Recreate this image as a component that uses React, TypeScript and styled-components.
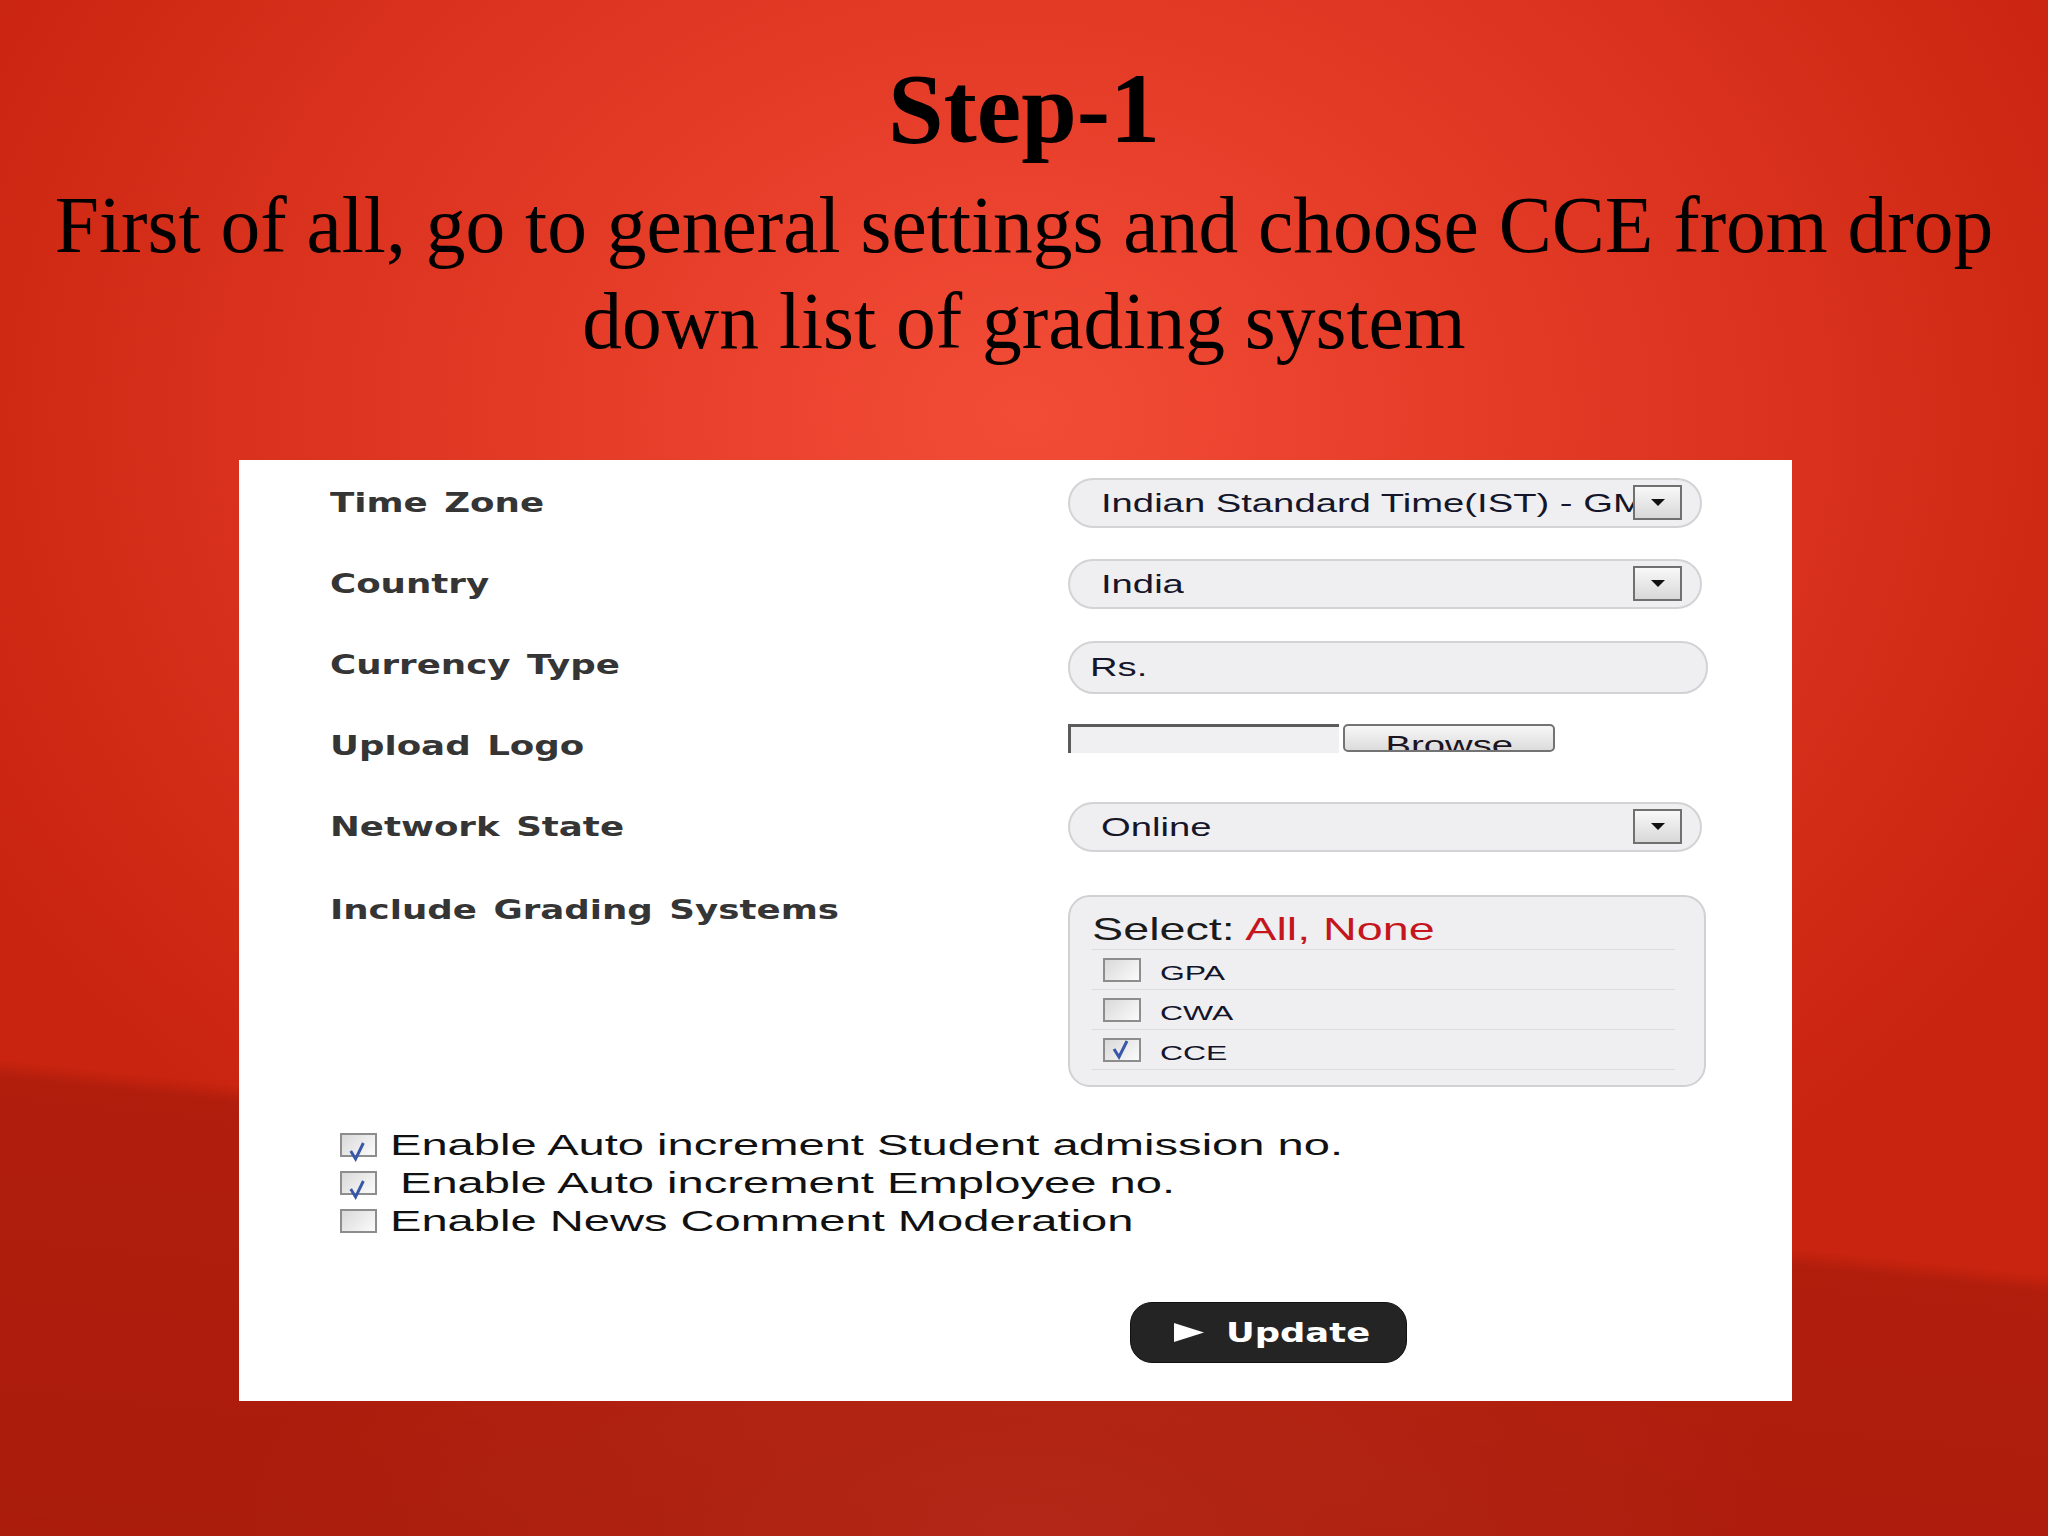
import React from 'react';
import styled, { createGlobalStyle } from 'styled-components';

const GlobalStyle = createGlobalStyle`
  html, body {
    margin: 0;
    padding: 0;
  }
  body {
    font-family: 'Liberation Sans', Arial, sans-serif;
  }
`;

// the form in the slide is a screenshot pasted wider than it was taken,
// so every piece of its text is widened on the x axis only
const Stretch = styled.span<{ $sx: number; $origin?: string }>`
  display: inline-block;
  white-space: nowrap;
  transform: scaleX(${(p) => p.$sx});
  transform-origin: ${(p) => p.$origin || 'left center'};
`;

const Page = styled.div`
  width: 2048px;
  height: 1536px;
  overflow: hidden;
  box-sizing: border-box;
  padding-top: 59px;
  background:
    linear-gradient(186deg, rgba(0, 0, 0, 0) 72.8%, rgba(70, 0, 0, 0.18) 73.8%, rgba(70, 0, 0, 0.24) 100%),
    radial-gradient(ellipse 38% 26% at 50% 100%, rgba(215, 62, 40, 0.55), rgba(215, 62, 40, 0) 100%),
    radial-gradient(ellipse 58% 62% at 50% 27%, #f24c37 0%, #e43b27 40%, #c9240f 100%);
`;

const Title = styled.h1`
  margin: 0;
  text-align: center;
  font: bold 100px/100px 'Liberation Serif', 'Times New Roman', serif;
  color: #000;
`;

const Subtitle = styled.p`
  margin: 18px 0 0;
  text-align: center;
  font: 79.5px/96px 'Liberation Serif', 'Times New Roman', serif;
  color: #000;
`;

const Panel = styled.section`
  width: 1553px;
  height: 941px;
  margin: 91px 0 0 239px;
  box-sizing: border-box;
  padding: 2px 0 0 91px;
  background: #fff;
`;

const Row = styled.div<{ $top?: boolean }>`
  display: flex;
  align-items: ${(p) => (p.$top ? 'flex-start' : 'center')};
  min-height: 81px;
  padding-top: ${(p) => (p.$top ? '28px' : '0')};
  box-sizing: border-box;
`;

const Label = styled.div`
  width: 738px;
  flex: none;
  font: bold 26px/30px 'DejaVu Sans', Verdana, sans-serif;
  color: #353535;
  word-spacing: 3px;
`;

const Select = styled.div`
  box-sizing: border-box;
  width: 634px;
  height: 50px;
  display: flex;
  align-items: center;
  padding: 0 18px 0 31px;
  border: 2px solid #d3d3d5;
  border-radius: 25px;
  background: #efeff1;
`;

const SelectValue = styled.div`
  flex: 1;
  min-width: 0;
  overflow: hidden;
  white-space: nowrap;
  font-size: 26px;
  line-height: 30px;
  color: #16162a;
`;

const ArrowButton = styled.span`
  flex: none;
  box-sizing: border-box;
  width: 49px;
  height: 35px;
  display: flex;
  align-items: center;
  justify-content: center;
  border: 2px solid #707070;
  background: linear-gradient(#f8f8f8, #d8d8d8);
`;

const TextInput = styled.div`
  box-sizing: border-box;
  width: 640px;
  height: 53px;
  margin-top: 6px;
  display: flex;
  align-items: center;
  padding-left: 20px;
  border: 2px solid #d3d3d5;
  border-radius: 26px;
  background: #efeff1;
  font-size: 26px;
  color: #16162a;
`;

const FileRow = styled.div`
  display: flex;
  gap: 4px;
  margin-top: -14px;
`;

const FileField = styled.div`
  box-sizing: border-box;
  width: 271px;
  height: 29px;
  border-top: 3px solid #5b5b5b;
  border-left: 3px solid #5b5b5b;
  background: #f0f0f2;
`;

const BrowseButton = styled.div`
  box-sizing: border-box;
  width: 212px;
  height: 28px;
  overflow: hidden;
  padding-top: 6px;
  text-align: center;
  border: 2px solid #737373;
  border-radius: 5px;
  background: linear-gradient(#f7f7f7, #dcdcdc);
  font-size: 26px;
  line-height: 26px;
  color: #1c1420;
`;

const GradeBox = styled.div`
  box-sizing: border-box;
  width: 638px;
  height: 192px;
  padding: 12px 29px 0 22px;
  border: 2px solid #d0d1d3;
  border-radius: 22px;
  background: #efeff1;
`;

const GradeHeader = styled.div`
  height: 41px;
  box-sizing: border-box;
  border-bottom: 1px solid #dcdcde;
  font-size: 32px;
  line-height: 40px;
  color: #1b1b1b;
`;

const Red = styled.span`
  color: #c4161c;
`;

const GradeRow = styled.div`
  height: 40px;
  box-sizing: border-box;
  display: flex;
  align-items: center;
  padding-left: 11px;
  border-bottom: 1px solid #dcdcde;
  font-size: 21px;
  color: #14142a;
`;

const Box = styled.span<{ $w: number }>`
  flex: none;
  box-sizing: border-box;
  width: ${(p) => p.$w}px;
  height: 24px;
  display: block;
  border: 2px solid #8d8d8d;
  background: linear-gradient(135deg, #d9d9d9, #fbfbfb);
`;

const BoxText = styled.span<{ $gap: number; $dy?: number }>`
  margin-left: ${(p) => p.$gap}px;
  padding-top: ${(p) => p.$dy || 0}px;
`;

const CheckList = styled.div`
  margin-top: 39px;
  padding-left: 10px;
`;

const CheckLine = styled.div`
  height: 38px;
  display: flex;
  align-items: center;
  font-size: 30px;
  color: #111;
`;

const UpdateButton = styled.button`
  box-sizing: border-box;
  width: 277px;
  height: 61px;
  margin: 62px 0 0 800px;
  display: flex;
  align-items: center;
  padding: 0 0 0 43px;
  border: 1px solid #111;
  border-radius: 22px;
  background: #242424;
  color: #fff;
  font: bold 27px/30px 'DejaVu Sans', Verdana, sans-serif;
  cursor: pointer;
`;

const UpdateText = styled.span`
  margin-left: 22px;
`;

const Checkbox = ({ checked, width }: { checked?: boolean; width: number }) => (
  <Box $w={width}>
    {checked && (
      <svg width="100%" height="100%" viewBox="0 0 34 20" preserveAspectRatio="none">
        <path d="M9 9 L14 17 L22 1" fill="none" stroke="#3957a8" strokeWidth="3" />
      </svg>
    )}
  </Box>
);

const Arrow = () => (
  <svg width="14" height="7" viewBox="0 0 14 7">
    <polygon points="0,0 14,0 7,7" fill="#111" />
  </svg>
);

const Dropdown = ({ value }: { value: string }) => (
  <Select>
    <SelectValue>
      <Stretch $sx={1.47}>{value}</Stretch>
    </SelectValue>
    <ArrowButton>
      <Arrow />
    </ArrowButton>
  </Select>
);

const FieldLabel = ({ children }: { children: React.ReactNode }) => (
  <Label>
    <Stretch $sx={1.37}>{children}</Stretch>
  </Label>
);

const grades = [
  { name: 'GPA', checked: false },
  { name: 'CWA', checked: false },
  { name: 'CCE', checked: true },
];

const options = [
  { text: 'Enable Auto increment Student admission no.', checked: true, gap: 13 },
  { text: 'Enable Auto increment Employee no.', checked: true, gap: 23 },
  { text: 'Enable News Comment Moderation', checked: false, gap: 13 },
];

export default function App() {
  return (
    <>
      <GlobalStyle />
      <Page>
        <Title>Step-1</Title>
        <Subtitle>
          First of all, go to general settings and choose CCE from drop
          <br />
          down list of grading system
        </Subtitle>
        <Panel>
          <Row>
            <FieldLabel>Time Zone</FieldLabel>
            <Dropdown value="Indian Standard Time(IST) - GMT+05:30" />
          </Row>
          <Row>
            <FieldLabel>Country</FieldLabel>
            <Dropdown value="India" />
          </Row>
          <Row>
            <FieldLabel>Currency Type</FieldLabel>
            <TextInput>
              <Stretch $sx={1.47}>Rs.</Stretch>
            </TextInput>
          </Row>
          <Row>
            <FieldLabel>Upload Logo</FieldLabel>
            <FileRow>
              <FileField />
              <BrowseButton>
                <Stretch $sx={1.47} $origin="center">
                  Browse
                </Stretch>
              </BrowseButton>
            </FileRow>
          </Row>
          <Row>
            <FieldLabel>Network State</FieldLabel>
            <Dropdown value="Online" />
          </Row>
          <Row $top>
            <FieldLabel>Include Grading Systems</FieldLabel>
            <GradeBox>
              <GradeHeader>
                <Stretch $sx={1.46}>
                  Select: <Red>All, None</Red>
                </Stretch>
              </GradeHeader>
              {grades.map((g) => (
                <GradeRow key={g.name}>
                  <Checkbox width={38} checked={g.checked} />
                  <BoxText $gap={19} $dy={6}>
                    <Stretch $sx={1.52}>{g.name}</Stretch>
                  </BoxText>
                </GradeRow>
              ))}
            </GradeBox>
          </Row>
          <CheckList>
            {options.map((o) => (
              <CheckLine key={o.text}>
                <Checkbox width={37} checked={o.checked} />
                <BoxText $gap={o.gap}>
                  <Stretch $sx={1.57}>{o.text}</Stretch>
                </BoxText>
              </CheckLine>
            ))}
          </CheckList>
          <UpdateButton type="button">
            <svg width="30" height="19" viewBox="0 0 30 19">
              <polygon points="0,0 30,9.5 0,19" fill="#fff" />
            </svg>
            <UpdateText>
              <Stretch $sx={1.31}>Update</Stretch>
            </UpdateText>
          </UpdateButton>
        </Panel>
      </Page>
    </>
  );
}
